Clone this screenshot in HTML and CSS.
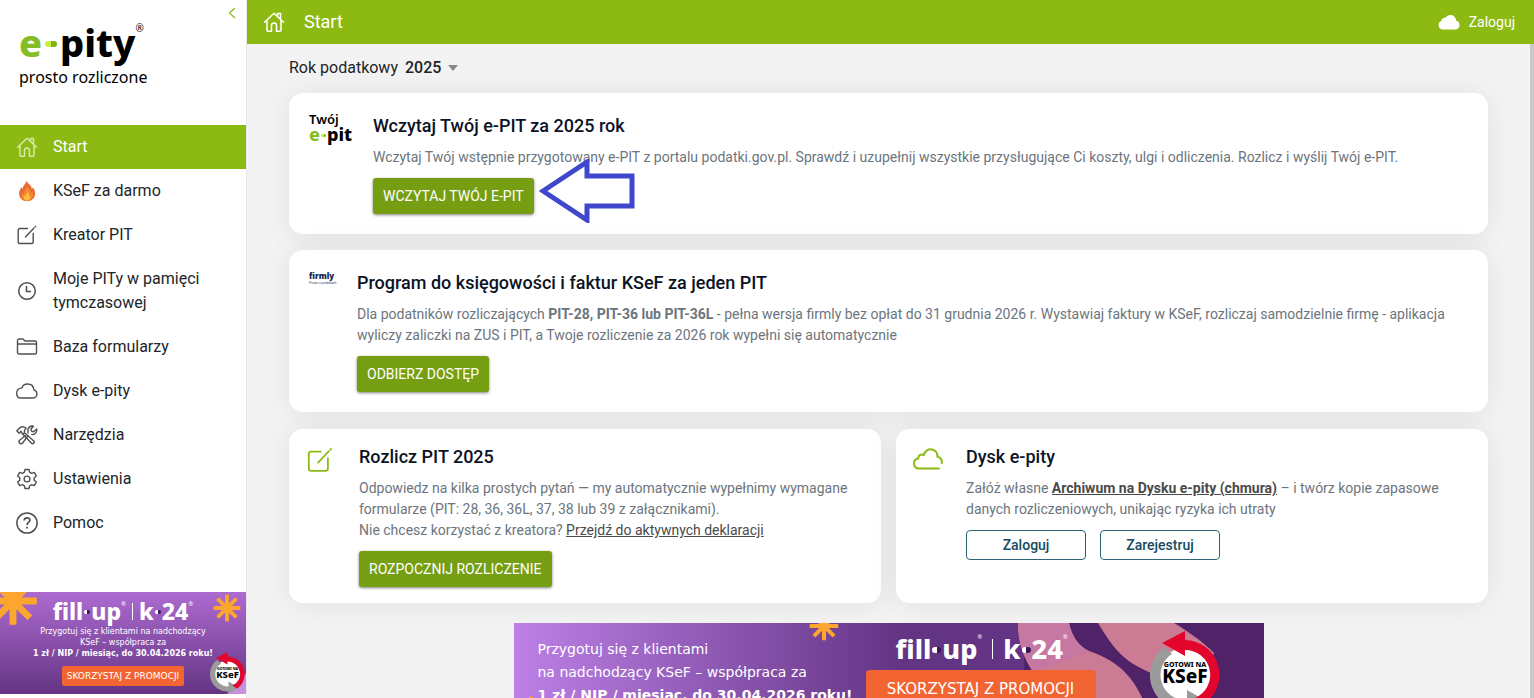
FILE: index.html
```html
<!DOCTYPE html>
<html lang="pl">

  <head>
    <meta charset="UTF-8">
    <meta name="viewport" content="width=device-width, initial-scale=1.0">
    <title>e-pity - Start</title>
    <link rel="stylesheet" href="styles.css">
  </head>

  <body>
    <!-- symbols shared by several places -->
    <svg class="symbols" width="0" height="0">
      <symbol id="home" viewBox="0 0 22 22">
        <path d="M1.500 11.200 11 2.200l9.500 9M4 9v10.200a1 1 0 0 0 1 1h3.500v-5.700a2.500 2.500 0 0 1 5 0v5.700H17a1 1 0 0 0 1-1V9M14.500 5V2.500h3V8" fill="none" stroke="currentColor" stroke-width="1.500" stroke-linecap="round" stroke-linejoin="round" />
      </symbol>
      <symbol id="edit" viewBox="0 0 22 22">
        <path d="M11.500 4.500H4a1.800 1.800 0 0 0-1.800 1.800v11.400a1.800 1.800 0 0 0 1.800 1.800h11.400a1.800 1.800 0 0 0 1.800-1.800V9.500M9.500 13 18 4M19.200 2.800l.5-.5" fill="none" stroke="currentColor" stroke-width="1.400" stroke-linecap="round" stroke-linejoin="round" />
      </symbol>
      <symbol id="star" viewBox="-20 -20 40 40">
        <path d="M0-19V19M-19 0H19M-13.500-13.500 13.500 13.500M-13.500 13.500 13.500-13.500" fill="none" stroke="#fba62f" stroke-width="5.500" />
      </symbol>
      <symbol id="ksef" viewBox="0 0 72 86">
        <circle cx="35" cy="46" r="27" fill="#fff" />
        <path d="M14 18A35 35 0 0 0 37 81v4l21-12-21-12v10A25 25 0 0 1 22 25z" fill="#9b9b9b" />
        <path d="M12 14 35 2v9a35 35 0 0 1 19 64l-9-6a25 25 0 0 0-10-48v6z" fill="#e2062c" />
      </symbol>
    </svg>

    <div class="container">
      <aside class="sidebar">
        <div class="brand">
          <button class="collapse" type="button" aria-label="Zwiń menu">
            <svg width="8" height="12" viewBox="0 0 8 12"><path d="M7 1 1.500 6 7 11" fill="none" stroke="#8cba13" stroke-width="1.200" /></svg>
          </button>
          <a class="logo" href="#">
            <span class="logo-name"><span class="logo-e">e</span><span class="logo-dash"></span>pity<sup>®</sup></span>
            <span class="logo-claim">prosto rozliczone</span>
          </a>
        </div>
        <nav class="menu">
          <a class="item active" href="#"><svg width="22" height="22"><use href="#home" /></svg>Start</a>
          <a class="item" href="#">
            <svg width="22" height="22" viewBox="0 0 22 22">
              <path d="M10.500.8c.8 3 5.500 4.300 5.300 8.300l1.200-1.700c1.500 1.700 2.500 4.500 2.100 7.100-.5 4-3.900 6.700-8.100 6.700s-7.500-2.700-7.900-6.700C2.800 11 4.500 8.800 5.700 7l1 2.400C6.500 5.500 9.800 4.500 10.500.8z" fill="#ec6a35" />
              <path d="M11.300 5.500c-.2 3 4.500 4.500 3.200 8.200l1.800-1.900c1.600 4.700-1 8.900-5.300 8.900-4.100 0-6.300-3.300-4.900-7.600l1.700 1.500c-.5-4 3.300-5 3.500-9.100z" fill="#f78a30" />
              <path d="M11.800 11.300c.2 2 1.700 3 1.200 5.100l1.300-1c.4 3.100-1.100 5-3.300 5-2.600 0-3.800-2.400-2.600-4.800l1.200.9c-.1-2.100 2-3.100 2.200-5.200z" fill="#fdbd3c" />
            </svg>KSeF za darmo</a>
          <a class="item" href="#"><svg width="22" height="22"><use href="#edit" /></svg>Kreator PIT</a>
          <a class="item" href="#">
            <svg width="22" height="22" viewBox="0 0 22 22" fill="none" stroke="currentColor" stroke-width="1.500"><circle cx="11" cy="11" r="8.300" /><path d="M10.500 6v5.500h4.500" /></svg>Moje PITy w pamięci tymczasowej</a>
          <a class="item" href="#">
            <svg width="22" height="22" viewBox="0 0 22 22" fill="none" stroke="currentColor" stroke-linejoin="round" stroke-width="1.400"><path d="M1.500 16.500v-12a1.500 1.500 0 0 1 1.500-1.500h4l2 2h10a1.500 1.500 0 0 1 1.500 1.500v10a1.500 1.500 0 0 1-1.500 1.500H3a1.500 1.500 0 0 1-1.500-1.500zM1.500 8h19" /></svg>Baza formularzy</a>
          <a class="item" href="#">
            <svg width="22" height="22" viewBox="0 0 22 22" fill="none" stroke="currentColor" stroke-width="1.400"><path d="M4.500 18h12.700a4.200 4.200 0 0 0 .7-8.200C17.500 6 14.800 4 11.500 4 8.700 4 6.800 5.400 5.800 7.900 2.700 8.300.7 10.400.7 13.200.7 16 2.300 18 4.500 18z" /></svg>Dysk e-pity</a>
          <a class="item" href="#">
            <svg width="22" height="22" viewBox="0 0 22 22" fill="none" stroke="currentColor" stroke-width="1.400" stroke-linejoin="round">
              <path d="m8.500 8.700 9.300 8.300a1.600 1.600 0 0 1-2.300 2.200l-8.500-9M6.600 10.400l2.200-2.100M8.800 8.300c-.8-1.200-.5-2.500 1.400-4C7.500 2.100 4.800 2.500 2.600 5L.8 6.700l2.300 2.500 2-1.900 1.500 3.100" />
              <path d="M12 9.500V5.200c1-2.600 3.200-3.700 5.400-3L15 5l.5 2.200 2.200.5 3-2.700c.6 3-1.300 5.600-4.200 5.600l-1.200-.2M12.300 11.300l-5.700 7.700a2 2 0 0 1-3-2.700l6.200-5" />
            </svg>Narzędzia</a>
          <a class="item" href="#">
            <svg width="22" height="22" viewBox="0 0 22 22" fill="none" stroke="currentColor" stroke-linejoin="round" stroke-width="1.400"><circle cx="11" cy="11" r="2.900" /><path d="M9 1.500h4l.6 2.700 2 1.100 2.700-.9 2 3.500-2.100 1.900v2.400l2.100 1.900-2 3.500-2.700-.9-2 1.100-.6 2.700H9l-.6-2.700-2-1.100-2.700.9-2-3.500 2.100-1.900V9.800L1.700 7.900l2-3.500 2.700.9 2-1.100z" /></svg>Ustawienia</a>
          <a class="item" href="#">
            <svg width="22" height="22" viewBox="0 0 22 22" fill="none" stroke="currentColor" stroke-width="1.500"><circle cx="11" cy="11" r="10.100" /><path d="M8.200 8.500c0-3.600 5.700-3.500 5.700-.2 0 2.100-2.900 2.100-2.900 4.600M11 14.800v1.700" stroke-width="1.700" /></svg>Pomoc</a>
        </nav>
        <div class="promo-small">
          <svg class="star star-left" width="50" height="50"><use href="#star" /></svg>
          <svg class="star star-right" width="28" height="28"><use href="#star" /></svg>
          <div class="partners">
            <span>fill<i></i>up<sup>®</sup></span><b class="bar"></b><span>k<i></i>24<sup>®</sup></span>
          </div>
          <p>Przygotuj się z klientami na nadchodzący<br>KSeF – współpraca za<br><strong>1 zł / NIP / miesiąc, do 30.04.2026 roku!</strong></p>
          <a class="promo-btn" href="#">SKORZYSTAJ Z PROMOCJI</a>
          <svg class="badge" width="36" height="43" viewBox="0 0 72 86">
            <path d="M72 45v45H30z" fill="#c78fdc" />
            <use href="#ksef" width="72" height="86" />
            <text x="35" y="38" text-anchor="middle" class="ksef-small">GOTOWI NA</text>
            <text x="35" y="54" text-anchor="middle" class="ksef-big">KSeF</text>
          </svg>
        </div>
      </aside>

      <div class="main">
        <header class="topbar">
          <svg width="22" height="22"><use href="#home" /></svg>
          <h1>Start</h1>
          <a class="login" href="#">
            <svg width="22" height="16" viewBox="0 0 22 16"><path d="M5 15.500h12a4.500 4.500 0 0 0 1.300-8.800C17.800 3 15.200 1 12.300 1 10 1 8.500 2 7.500 3.700 5 3.300 3.400 4.800 3.300 7 1.500 7.700.5 9.200.5 11c0 2.600 2 4.500 4.500 4.500z" fill="#fff" /></svg>Zaloguj</a>
        </header>
        <main class="content">
          <button class="year" type="button">Rok podatkowy <b>2025</b><span class="caret"></span></button>

          <section class="card wide">
            <div class="epit"><span>Twój</span><span class="epit-name"><span class="logo-e">e</span><span class="logo-dash"></span>pit</span></div>
            <div class="text">
              <h2>Wczytaj Twój e-PIT za 2025 rok</h2>
              <p>Wczytaj Twój wstępnie przygotowany e-PIT z portalu podatki.gov.pl. Sprawdź i uzupełnij wszystkie przysługujące Ci koszty, ulgi i odliczenia. Rozlicz i wyślij Twój e-PIT.</p>
              <div class="action">
                <button class="btn" type="button">WCZYTAJ TWÓJ E-PIT</button>
                <svg class="arrow" width="96" height="64" viewBox="0 0 96 64"><path d="M4 32 48 3v14h45v30H48v14z" fill="none" stroke="#3f48cc" stroke-width="5" /></svg>
              </div>
            </div>
          </section>

          <section class="card wide">
            <div class="firmly"><b>firmly</b><small>Prosto o podatkach</small></div>
            <div class="text">
              <h2>Program do księgowości i faktur KSeF za jeden PIT</h2>
              <p>Dla podatników rozliczających <strong>PIT-28, PIT-36 lub PIT-36L</strong> - pełna wersja firmly bez opłat do 31 grudnia 2026 r. Wystawiaj faktury w KSeF, rozliczaj samodzielnie firmę - aplikacja wyliczy zaliczki na ZUS i PIT, a Twoje rozliczenie za 2026 rok wypełni się automatycznie</p>
              <button class="btn" type="button">ODBIERZ DOSTĘP</button>
            </div>
          </section>

          <div class="columns">
            <section class="card">
              <div class="icon"><svg width="28" height="28"><use href="#edit" /></svg></div>
              <div class="text">
                <h2>Rozlicz PIT 2025</h2>
                <p>Odpowiedz na kilka prostych pytań — my automatycznie wypełnimy wymagane formularze (PIT: 28, 36, 36L, 37, 38 lub 39 z załącznikami).<br>Nie chcesz korzystać z kreatora? <a href="#">Przejdź do aktywnych deklaracji</a></p>
                <button class="btn" type="button">ROZPOCZNIJ ROZLICZENIE</button>
              </div>
            </section>
            <section class="card">
              <div class="icon"><svg width="30" height="28" viewBox="0 0 30 28"><path d="M26 22.500H6.500C3 22.500 1 20.600 1 17.500c0-2.800 1.800-4.700 4.300-5C5 9.500 8 7.700 10.800 9 12 5 15.500 2.700 19 3.500c3.700.8 5.700 3.800 5.300 7.300 3.300.8 4.900 3 4.500 6.200" fill="none" stroke="#8cba13" stroke-width="2" stroke-linecap="round" stroke-linejoin="round" /></svg></div>
              <div class="text">
                <h2>Dysk e-pity</h2>
                <p>Załóż własne <a href="#"><strong>Archiwum na Dysku e-pity (chmura)</strong></a> – i twórz kopie zapasowe danych rozliczeniowych, unikając ryzyka ich utraty</p>
                <div class="buttons">
                  <button class="btn-outline" type="button">Zaloguj</button>
                  <button class="btn-outline" type="button">Zarejestruj</button>
                </div>
              </div>
            </section>
          </div>

          <div class="promo">
            <svg class="waves" width="430" height="100" viewBox="0 0 430 100">
              <path d="M190 0h240v100H190z" fill="#502268" />
              <path d="M184 0h51c3 13 9 23 20 28 36 12 52 35 62 72H220l-20-50c-10-14-16-30-16-50z" fill="#cc7b94" />
              <path d="M184 0h51c3 13 9 23 20 28l-55 22c-10-14-16-30-16-50z" fill="#c678a2" />
              <path d="M264 0h76c12 7 28 18 40 30l-20 70h-16c-6-30-9-41-22-48-30-12-40-22-58-52z" fill="#cc7b94" />
            </svg>
            <svg class="star star-top" width="30" height="30"><use href="#star" /></svg>
            <svg class="star star-bottom" width="30" height="30"><use href="#star" /></svg>
            <p>Przygotuj się z klientami<br>na nadchodzący KSeF – współpraca za<br><strong>1 zł / NIP / miesiąc, do 30.04.2026 roku!</strong></p>
            <div class="offer">
              <div class="partners">
                <span>fill<i></i>up<sup>®</sup></span><b class="bar"></b><span>k<i></i>24<sup>®</sup></span>
              </div>
              <a class="promo-btn" href="#">SKORZYSTAJ Z PROMOCJI</a>
            </div>
            <svg class="badge" width="72" height="86" viewBox="0 0 72 86">
              <use href="#ksef" width="72" height="86" />
              <text x="35" y="38" text-anchor="middle" class="ksef-small">GOTOWI NA</text>
              <text x="35" y="54" text-anchor="middle" class="ksef-big">KSeF</text>
            </svg>
          </div>
        </main>
      </div>
    </div>
  </body>

</html>
```
FILE: styles.css
```css
* {
  padding: 0;
  margin: 0;
  box-sizing: border-box;
}

body {
  font-family: Roboto, "Liberation Sans", sans-serif;
  font-size: 16px;
  color: #212529;
  overflow: hidden;
}

button {
  font-family: inherit;
  cursor: pointer;
}

a {
  color: inherit;
  text-decoration: none;
}

.symbols {
  position: absolute;
}

.container {
  display: flex;
  height: 100vh;
}

/* sidebar */
.sidebar {
  flex: 0 0 247px;
  display: flex;
  flex-direction: column;
  background-color: #fff;
  border-right: 1px solid #e8e8e8;
  padding-bottom: 4px;
}

.brand {
  display: flex;
  flex-direction: column;
  height: 125px;
  padding: 7px 10px 0 19px;
}

.collapse {
  align-self: flex-end;
  display: flex;
  border: 0;
  background: none;
}

.logo {
  display: flex;
  flex-direction: column;
  color: #000;
  font-family: "Noto Sans", "Open Sans", sans-serif;
}

.logo-name {
  display: flex;
  align-items: center;
  font-size: 38px;
  font-weight: 800;
  line-height: 46px;
}

.logo-name sup {
  align-self: flex-start;
  font-size: 10px;
  font-weight: 400;
  line-height: 18px;
}

.logo-e {
  color: #86bc25;
}

.logo-dash {
  width: 12px;
  height: 6px;
  margin: 4px 3px 0;
  border-radius: 3px;
  background: linear-gradient(90deg, #c8f03c 50%, #7cb518 50%);
}

.logo-claim {
  font-size: 16px;
  line-height: 24px;
}

.item {
  display: flex;
  align-items: center;
  gap: 15px;
  padding: 10px 30px 10px 16px;
  line-height: 24px;
  color: #212529;
}

.menu {
  padding-top: 0;
}

.item svg {
  flex-shrink: 0;
  color: #505050;
}

.item.active {
  background-color: #8cba13;
  color: #fff;
}

.item.active svg {
  color: #d5e9a5;
}

/* promo in the sidebar */
.promo-small {
  position: relative;
  overflow: hidden;
  display: flex;
  flex-direction: column;
  align-items: center;
  height: 102px;
  margin-top: auto;
  padding-top: 6px;
  background: linear-gradient(#ad6bd0, #643483);
  color: #fff;
  font-family: "DejaVu Sans", sans-serif;
}

.promo-small p {
  margin-top: 2px;
  font-size: 8px;
  line-height: 11px;
  text-align: center;
}

.promo-small .promo-btn {
  margin-top: 7px;
  padding: 0 5px;
  border-radius: 2px;
  font-size: 9px;
  line-height: 20px;
}

.promo-small .badge {
  position: absolute;
  right: 0;
  bottom: 0;
}

.partners {
  display: flex;
  align-items: center;
  gap: 6px;
  font-family: "Noto Sans", "Open Sans", sans-serif;
  font-size: 23px;
  font-weight: 800;
  line-height: 26px;
}

.partners span {
  display: flex;
  align-items: center;
}

.partners i {
  width: 6px;
  height: 4px;
  margin: 2px 1px 0;
  border-radius: 2px;
  background: linear-gradient(90deg, #fff 50%, #38185a 50%);
}

.partners sup {
  align-self: flex-start;
  font-size: 6px;
  font-weight: 400;
  line-height: 12px;
}

.partners .bar {
  width: 1px;
  height: 17px;
  background-color: #fff;
}

.promo-btn {
  background-color: #f26532;
  color: #fff;
}

.star {
  position: absolute;
}

.star-left {
  left: -12px;
  top: -16px;
}

.star-right {
  right: 5px;
  top: 2px;
}

.star-top {
  left: 295px;
  top: -12px;
}

.star-bottom {
  left: 2px;
  top: 73px;
}

/* main column */
.main {
  flex: 1;
  min-width: 0;
  display: flex;
  flex-direction: column;
  background-color: #f3f3f3;
}

.topbar {
  flex: 0 0 44px;
  display: flex;
  align-items: center;
  gap: 19px;
  padding: 0 19px 0 16px;
  background-color: #8cba13;
  color: #fff;
}

.topbar h1 {
  font-size: 18px;
  font-weight: 400;
  line-height: 20px;
}

.login {
  display: flex;
  align-items: center;
  gap: 9px;
  margin-left: auto;
  font-size: 14px;
}

.content {
  flex: 1;
  min-height: 0;
  overflow: hidden;
  display: flex;
  flex-direction: column;
  gap: 16px;
  padding: 12px 42px 0 42px;
  border-right: 4px solid #c9c9c9;
}

.year {
  align-self: flex-start;
  display: flex;
  align-items: center;
  gap: 7px;
  margin-bottom: -3px;
  border: 0;
  background: none;
  font-size: 16px;
  line-height: 24px;
  color: #212529;
}

.year b {
  font-weight: 500;
}

.caret {
  border: 5px solid transparent;
  border-top: 6px solid #888;
  border-bottom: 0;
}

.card {
  display: flex;
  padding: 15px 17px 16px;
  border-radius: 14px;
  background-color: #fff;
  box-shadow: 0 2px 30px rgba(0, 0, 0, .08);
}

.card.wide {
  padding: 20px;
}

.card h2 {
  margin-bottom: 8px;
  font-size: 18px;
  font-weight: 500;
  line-height: 26px;
  color: #0b1324;
}

.card p {
  margin-bottom: 10px;
  font-size: 14px;
  line-height: 21px;
  color: #6c757d;
}

.card strong {
  font-weight: 700;
}

.card p a {
  color: #4a4a4a;
  text-decoration: underline;
}

.columns {
  display: grid;
  grid-template-columns: 1fr 1fr;
  gap: 15px;
  padding-top: 1px;
}

.icon {
  flex: 0 0 53px;
  padding-top: 2px;
  color: #8cba13;
}

.epit {
  flex: 0 0 64px;
  display: flex;
  flex-direction: column;
  color: #000;
  font-family: "Noto Sans", "Open Sans", sans-serif;
  font-size: 13px;
  font-weight: 600;
  line-height: 13px;
}

.epit-name {
  display: flex;
  align-items: center;
  font-size: 18px;
  font-weight: 800;
  line-height: 16px;
}

.epit .logo-dash {
  width: 5px;
  height: 3px;
  margin: 2px 1px 0;
}

.firmly {
  flex: 0 0 48px;
  color: #14234b;
  font-family: "Noto Sans", "Open Sans", sans-serif;
}

.firmly b {
  display: block;
  font-size: 8px;
  font-weight: 900;
  line-height: 12px;
}

.firmly small {
  display: block;
  font-size: 3px;
  line-height: 3px;
}

.btn {
  padding: 0 10px;
  border: 0;
  border-radius: 3px;
  background-color: #769e13;
  box-shadow: 0 1px 3px rgba(0, 0, 0, .5);
  color: #fff;
  font-size: 14px;
  line-height: 36px;
}

.action {
  position: relative;
  display: inline-block;
}

.arrow {
  position: absolute;
  left: 100%;
  top: -19px;
  margin-left: 5px;
}

.buttons {
  display: flex;
  gap: 14px;
}

.btn-outline {
  width: 120px;
  border: 1px solid #2b6479;
  border-radius: 4px;
  background-color: #fff;
  color: #154a5f;
  font-size: 14px;
  font-weight: 500;
  line-height: 28px;
}

/* bottom promo */
.promo {
  position: relative;
  overflow: hidden;
  flex: 0 0 100px;
  align-self: center;
  display: flex;
  width: 750px;
  margin-top: 4px;
  padding-left: 24px;
  background: linear-gradient(90deg, #bc80e6, #633384 52%);
  color: #fff;
  font-family: "DejaVu Sans", sans-serif;
}

.promo p {
  position: relative;
  flex: 0 0 328px;
  padding-top: 15px;
  font-size: 14px;
  line-height: 23px;
  white-space: nowrap;
}

.promo .waves {
  position: absolute;
  right: 0;
  top: 0;
}

.offer {
  position: relative;
  padding-top: 8px;
}

.offer .partners {
  margin: 0 0 3px 30px;
  gap: 10px;
  font-size: 27px;
  line-height: 36px;
}

.offer .partners i {
  width: 9px;
  height: 6px;
  margin: 2px 1px 0;
  border-radius: 3px;
}

.offer .partners .bar {
  height: 20px;
}

.offer .promo-btn {
  display: block;
  width: 230px;
  border-radius: 4px;
  font-size: 15px;
  line-height: 38px;
  text-align: center;
}

.promo .badge {
  position: absolute;
  right: 42px;
  top: 6px;
}

.ksef-small {
  font: 800 7px "Noto Sans", sans-serif;
}

.ksef-big {
  font: 800 19px "Noto Sans", sans-serif;
}
```
